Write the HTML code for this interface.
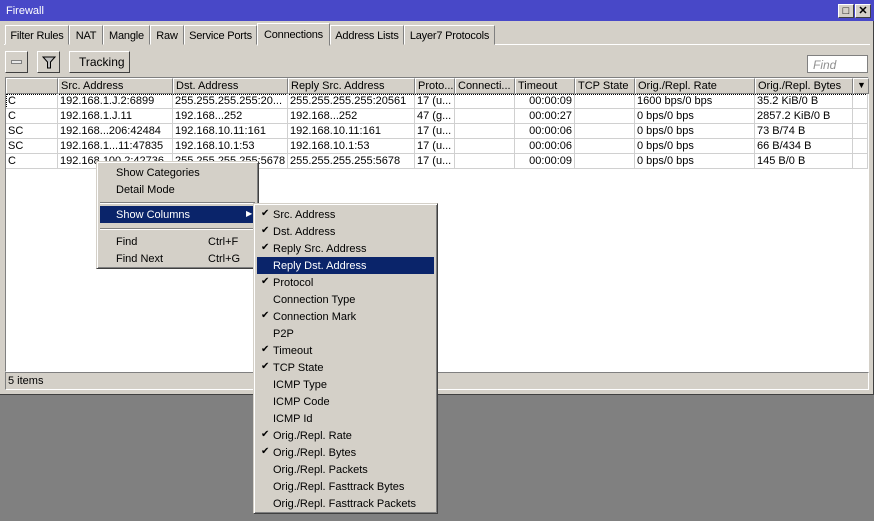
<!DOCTYPE html>
<html><head><style>
*{box-sizing:border-box;margin:0;padding:0}
body{width:874px;height:521px;background:#808080;font-family:"Liberation Sans",sans-serif;font-size:11px;color:#000;position:relative;overflow:hidden}
.a{position:absolute}
.win{left:0;top:0;width:874px;height:395px;background:#d4d0c8;border-right:1px solid #404040;border-bottom:1px solid #404040}
.title{left:0;top:0;width:874px;height:21px;background:#4848c8;color:#fff;font-size:11px;padding:5px 0 0 6px}
.tb{width:16px;height:14px;top:4px;background:#d4d0c8;border:1px solid;border-color:#fff #404040 #404040 #fff;font-size:11px;font-weight:bold;text-align:center;line-height:12px;color:#000}
.tab{top:25px;height:20px;border:1px solid;border-color:#fff #808080 #d4d0c8 #fff;padding-top:4px;text-align:center;white-space:nowrap;letter-spacing:-0.2px;background:#d4d0c8}
.btn{border:1px solid;border-color:#fff #404040 #404040 #fff;background:#d4d0c8}
.tbl{left:5px;top:77px;width:864px;height:295px;background:#fff;border:1px solid;border-color:#808080 #fff #fff #808080}
.h{top:0;height:16px;background:#d4d0c8;border:1px solid;border-color:#fff #808080 #808080 #fff;padding:1px 0 0 2px;white-space:nowrap;overflow:hidden}
.c{height:15px;border-right:1px solid #d0d0d0;border-bottom:1px solid #d0d0d0;padding:1px 0 0 2px;white-space:nowrap;overflow:hidden}
.r{text-align:right;padding-right:2px}
.menu{background:#d4d0c8;border:1px solid;border-color:#d4d0c8 #404040 #404040 #d4d0c8;box-shadow:inset 1px 1px #fff,inset -1px -1px #808080}
.mi{left:3px;height:17px;padding:3px 0 0 16px;white-space:nowrap}
.sel{background:#0a246a;color:#fff}
.sep{left:3px;height:2px;border-top:1px solid #808080;border-bottom:1px solid #fff}
.ck{position:absolute;left:4px;top:2px;font-size:10px}
</style></head><body>
<div class="a win"></div>
<div class="a title">Firewall</div>
<div class="a tb" style="left:838px">□</div>
<div class="a tb" style="left:855px">✕</div>

<div class="a" style="left:4px;top:44px;width:866px;height:1px;background:#fff"></div>
<div class="a tab" style="left:5px;width:64px">Filter Rules</div>
<div class="a tab" style="left:69px;width:34px">NAT</div>
<div class="a tab" style="left:103px;width:47px">Mangle</div>
<div class="a tab" style="left:150px;width:34px">Raw</div>
<div class="a tab" style="left:184px;width:73px">Service Ports</div>
<div class="a tab" style="left:257px;width:73px;top:23px;height:23px;padding-top:5px">Connections</div>
<div class="a tab" style="left:330px;width:74px">Address Lists</div>
<div class="a tab" style="left:404px;width:91px">Layer7 Protocols</div>

<div class="a btn" style="left:5px;top:51px;width:23px;height:22px"><div class="a" style="left:5px;top:8px;width:11px;height:4px;border:1px solid #808080;background:#e8e8e8"></div></div>
<div class="a btn" style="left:37px;top:51px;width:23px;height:22px"><svg class="a" style="left:4px;top:3px" width="14" height="15"><path d="M1 2h12l-4.5 5v6h-3v-6z" fill="#c0c0c0" stroke="#000"/></svg></div>
<div class="a btn" style="left:69px;top:51px;width:61px;height:22px;padding:3px 0 0 9px;font-size:12px">Tracking</div>
<div class="a" style="left:807px;top:55px;width:61px;height:18px;background:#fff;border:1px solid #808080;color:#909090;font-style:italic;padding:2px 5px;font-size:12px">Find</div>

<div class="a tbl">
<div class="a h" style="left:0;width:52px"></div>
<div class="a h" style="left:52px;width:115px">Src. Address</div>
<div class="a h" style="left:167px;width:115px">Dst. Address</div>
<div class="a h" style="left:282px;width:127px">Reply Src. Address</div>
<div class="a h" style="left:409px;width:40px">Proto...</div>
<div class="a h" style="left:449px;width:60px">Connecti...</div>
<div class="a h" style="left:509px;width:60px">Timeout</div>
<div class="a h" style="left:569px;width:60px">TCP State</div>
<div class="a h" style="left:629px;width:120px">Orig./Repl. Rate</div>
<div class="a h" style="left:749px;width:98px">Orig./Repl. Bytes</div>
<div class="a h" style="left:847px;width:16px;font-size:9px;padding-left:3px">▼</div>
<div class="a" style="left:0;top:16px;width:862px">
<div class="a" style="left:0;top:0;width:862px;height:15px;border:1px dotted #000"></div>
</div>
</div>

<div class="a" id="rows" style="left:6px;top:94px"></div>
<script>
var d=[["C","192.168.1.J.2:6899","255.255.255.255:20...","255.255.255.255:20561","17 (u...","","00:00:09","","1600 bps/0 bps","35.2 KiB/0 B"],
["C","192.168.1.J.11","192.168...252","192.168...252","47 (g...","","00:00:27","","0 bps/0 bps","2857.2 KiB/0 B"],
["SC","192.168...206:42484","192.168.10.11:161","192.168.10.11:161","17 (u...","","00:00:06","","0 bps/0 bps","73 B/74 B"],
["SC","192.168.1...11:47835","192.168.10.1:53","192.168.10.1:53","17 (u...","","00:00:06","","0 bps/0 bps","66 B/434 B"],
["C","192.168.100.2:42736","255.255.255.255:5678","255.255.255.255:5678","17 (u...","","00:00:09","","0 bps/0 bps","145 B/0 B"]];
var x=[0,52,167,282,409,449,509,569,629,749,847,862],h="";
d.forEach(function(r,i){r.push("");r.forEach(function(v,j){h+='<div class="a c'+(j==6?' r':'')+'" style="left:'+x[j]+'px;top:'+(i*15)+'px;width:'+(x[j+1]-x[j])+'px">'+v+'</div>'})});
document.getElementById('rows').innerHTML=h;
</script>

<div class="a" style="left:5px;top:372px;width:864px;height:18px;border:1px solid;border-color:#808080 #fff #fff #808080;padding:2px 0 0 2px">5 items</div>

<div class="a menu" style="left:96px;top:161px;width:163px;height:108px">
<div class="a mi" style="top:2px">Show Categories</div>
<div class="a mi" style="top:19px">Detail Mode</div>
<div class="a sep" style="top:40px;width:155px"></div>
<div class="a mi sel" style="top:44px;width:155px">Show Columns<span class="a" style="left:146px;top:3px;font-size:8px">▶</span></div>
<div class="a sep" style="top:66px;width:155px"></div>
<div class="a mi" style="top:71px;width:155px">Find<span class="a" style="left:108px;top:3px">Ctrl+F</span></div>
<div class="a mi" style="top:88px;width:155px">Find Next<span class="a" style="left:108px;top:3px">Ctrl+G</span></div>
</div>

<div class="a menu" id="sub" style="left:253px;top:203px;width:185px;height:311px"></div>
<script>
var it=[["Src. Address",1],["Dst. Address",1],["Reply Src. Address",1],["Reply Dst. Address",0,1],["Protocol",1],["Connection Type"],["Connection Mark",1],["P2P"],["Timeout",1],["TCP State",1],["ICMP Type"],["ICMP Code"],["ICMP Id"],["Orig./Repl. Rate",1],["Orig./Repl. Bytes",1],["Orig./Repl. Packets"],["Orig./Repl. Fasttrack Bytes"],["Orig./Repl. Fasttrack Packets"]],s="";
it.forEach(function(v,i){s+='<div class="a mi'+(v[2]?' sel':'')+'" style="top:'+(2+i*17)+'px;width:177px;padding-left:16px">'+(v[1]?'<span class="ck">✔</span>':'')+v[0]+'</div>'});
document.getElementById('sub').innerHTML=s;
</script>
</body></html>
